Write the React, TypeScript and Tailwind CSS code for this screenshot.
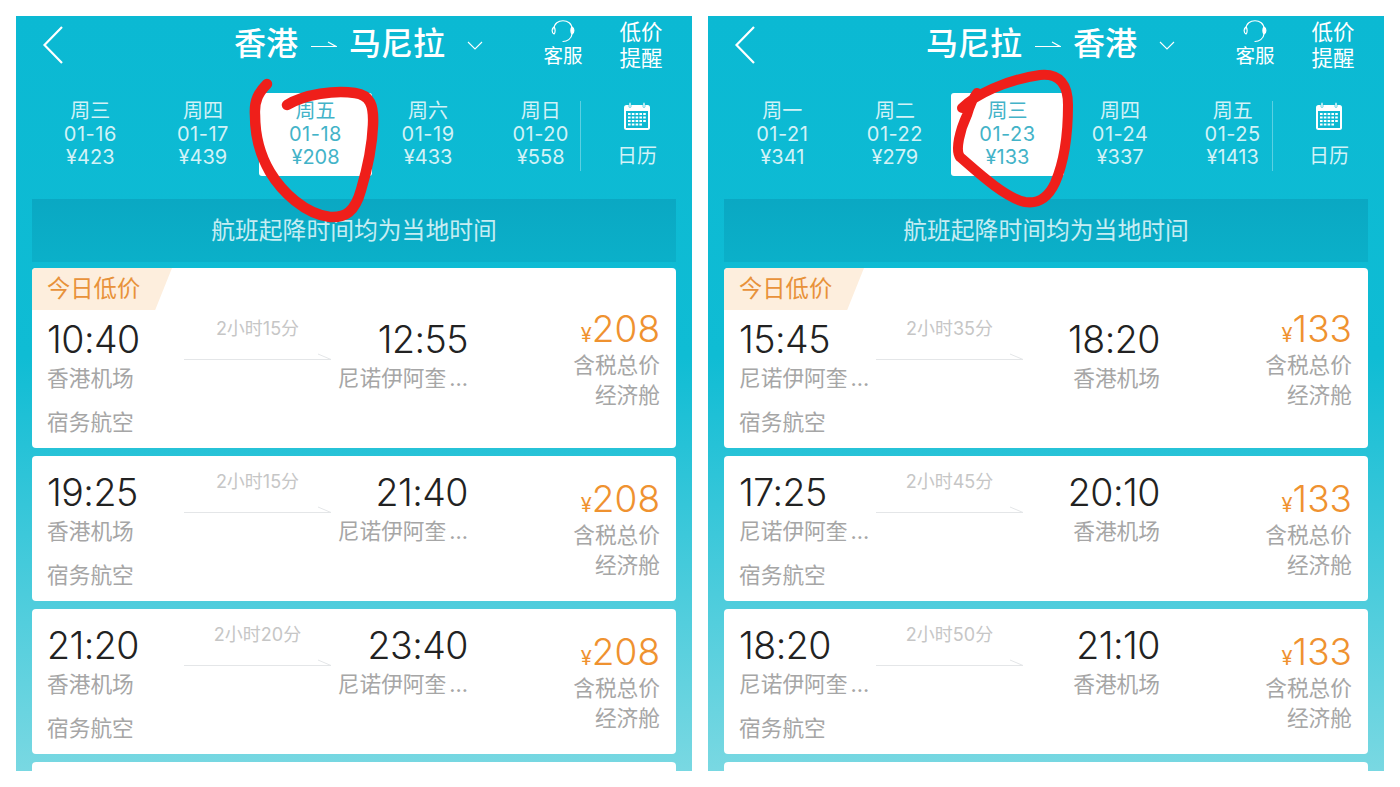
import React from 'react';

type Day = { week: string; date: string; price: string; active?: boolean };
type Flight = { dep: string; arr: string; from: React.ReactNode; to: React.ReactNode; dur: string; price: string; low?: boolean };
type Screen = { title: [string, string]; days: Day[]; flights: Flight[]; circle: React.ReactNode };

function Headset() {
  return (
    <svg width="28" height="24" viewBox="0 0 28 24" fill="none" stroke="white" strokeWidth="1.2" strokeLinecap="round">
      <path d="M5 10 C5 -1 23 -1 23 10" />
      <path d="M5 8 C2.5 9 2.5 14 5 15 C6.5 14 6.5 9 5 8 Z" />
      <path d="M23 8 C25.5 9 25.5 14 23 15 C21.5 14 21.5 9 23 8 Z" fill="white" />
      <path d="M23 15 C22.5 20 18 22.5 14 22.5" />
    </svg>
  );
}

function CalendarIcon() {
  return (
    <svg width="30" height="30" viewBox="0 0 30 30" fill="none">
      <rect x="2" y="4" width="26" height="25" rx="2.5" fill="white" />
      <rect x="4" y="10" width="22" height="17" fill="#0db8d2" />
      <rect x="7" y="1.5" width="2" height="5" rx="1" fill="white" stroke="#0db8d2" strokeWidth="0.6" />
      <rect x="21" y="1.5" width="2" height="5" rx="1" fill="white" stroke="#0db8d2" strokeWidth="0.6" />
      <path d="M6 13 H24 M6 16.5 H24 M6 20 H24 M6 23.5 H20" stroke="white" strokeWidth="2.2" strokeDasharray="2.6 1.2" />
    </svg>
  );
}

function FlightCard({ f }: { f: Flight }) {
  return (
    <div className={`relative flex shrink-0 rounded-[4px] bg-white ${f.low ? 'h-[180px]' : 'h-[145px]'}`}>
      {f.low && (
        <div className="absolute left-0 top-0 flex h-[42px] w-[140px] items-center rounded-tl-[4px] bg-[#fdeedd] pl-[15px] text-[23.3px] text-[#e8923a] [clip-path:polygon(0_0,100%_0,88%_100%,0_100%)]">
          今日低价
        </div>
      )}
      <div className={`w-[152px] shrink-0 pl-[15px] ${f.low ? 'pt-[49px]' : 'pt-[14px]'}`}>
        <div className="h-[46px] text-[37.5px] leading-[46px] font-light tracking-[-0.5px] text-[#222]">{f.dep}</div>
        <div className="mt-[2px] h-[26px] text-[21.7px] leading-[26px] whitespace-nowrap text-[#a6a6a6]">{f.from}</div>
        <div className="mt-[18px] h-[26px] text-[21.7px] leading-[26px] text-[#a6a6a6]">宿务航空</div>
      </div>
      <div className={`w-[147px] shrink-0 ${f.low ? 'pt-[50px]' : 'pt-[15px]'}`}>
        <div className="h-[22px] text-center text-[18px] leading-[22px] text-[#c6c6c6]">{f.dur}</div>
        <svg className="mt-[11px] block" width="147" height="10" viewBox="0 0 147 10" fill="none" stroke="#e4e6e8" strokeWidth="1">
          <path d="M0 8.5 H147 L134 3" />
        </svg>
      </div>
      <div className={`w-[137px] shrink-0 text-right ${f.low ? 'pt-[49px]' : 'pt-[14px]'}`}>
        <div className="h-[46px] text-[37.5px] leading-[46px] font-light tracking-[-0.5px] text-[#222]">{f.arr}</div>
        <div className="mt-[2px] h-[26px] text-[21.7px] leading-[26px] whitespace-nowrap text-[#a6a6a6]">{f.to}</div>
      </div>
      <div className={`flex-1 pr-[16px] text-right ${f.low ? 'pt-[38px]' : 'pt-[20px]'}`}>
        <div className="h-[46px] leading-[46px] text-[#ef9230]">
          <span className="text-[20px]">¥</span>
          <span className="text-[37px] font-light">{f.price}</span>
        </div>
        <div className="h-[26px] text-[21.7px] leading-[26px] text-[#a6a6a6]">含税总价</div>
        <div className="mt-[4px] h-[26px] text-[21.7px] leading-[26px] text-[#a6a6a6]">经济舱</div>
      </div>
    </div>
  );
}

function Panel({ s }: { s: Screen }) {
  return (
    <div className="relative flex h-[755px] w-[676px] shrink-0 flex-col overflow-hidden bg-[linear-gradient(#0bb9d3,#0fbcd4_45%,#79d8e2)]">
      <div className="flex h-[74px] shrink-0 items-start text-white">
        <svg className="mt-[9px] ml-[26px] shrink-0" width="22" height="40" viewBox="0 0 22 40" fill="none" stroke="white" strokeWidth="2.2">
          <path d="M20 2 L2.5 20 L20 38" />
        </svg>
        <div className="mt-[6px] ml-[170px] flex h-[44px] w-[211px] shrink-0 items-center justify-between text-[32px] font-medium">
          <span>{s.title[0]}</span>
          <svg width="26" height="12" viewBox="0 0 26 12" fill="none" stroke="white" strokeWidth="1.2">
            <path d="M0 8.5 H25 L17 4" />
          </svg>
          <span>{s.title[1]}</span>
        </div>
        <svg className="mt-[25px] ml-[22px] shrink-0" width="16" height="9" viewBox="0 0 16 9" fill="none" stroke="white" strokeWidth="1.1">
          <path d="M1 1 L8 8 L15 1" />
        </svg>
        <div className="mt-[3px] ml-[55px] flex w-[50px] shrink-0 flex-col items-center">
          <Headset />
          <div className="mt-[1px] text-[19.5px] leading-[24px]">客服</div>
        </div>
        <div className="mt-[3px] ml-[31px] w-[44px] shrink-0 text-center text-[21.5px] leading-[26px] whitespace-nowrap">
          低价
          <br />
          提醒
        </div>
      </div>

      <div className="flex h-[86px] shrink-0 pr-[15px] pl-[18px] text-center text-[#d2f2f7]">
        {s.days.map((d, i) => (
          <div
            key={d.date}
            className={`relative mt-[3px] flex h-[83px] w-[112.6px] shrink-0 flex-col items-center justify-center text-[20px] leading-[23px] ${d.active ? 'rounded-[3px] bg-white text-[#43b3c8]' : ''}`}
          >
            <div>{d.week}</div>
            <div className="tracking-[0.5px]">{d.date}</div>
            <div>¥{d.price}</div>
            {i === 4 && <div className="absolute top-[8px] right-[16px] h-[70px] w-px bg-[#5cd0e2]" />}
          </div>
        ))}
        <div className="flex flex-1 flex-col items-center pt-[11px]">
          <CalendarIcon />
          <div className="mt-[12px] text-[20px] leading-[26px]">日历</div>
        </div>
      </div>

      <div className="mx-[16px] mt-[23px] flex h-[63px] shrink-0 items-center justify-center bg-[linear-gradient(#0aa8c3,#0bb0c9)] text-[23.8px] text-[#c6edf3]">
        航班起降时间均为当地时间
      </div>

      <div className="mx-[16px] mt-[6px] flex flex-col gap-[8px]">
        {s.flights.map((f) => (
          <FlightCard key={f.dep} f={f} />
        ))}
        <div className="h-[40px] shrink-0 rounded-[4px] bg-white" />
      </div>

      {s.circle}
    </div>
  );
}

const aquino = (
  <>
    尼诺伊阿奎<span className="ml-[3px]">…</span>
  </>
);
const base = { from: '香港机场', to: aquino };
const back = { from: aquino, to: '香港机场' };

const screens: Screen[] = [
  {
    title: ['香港', '马尼拉'],
    days: [
      { week: '周三', date: '01-16', price: '423' },
      { week: '周四', date: '01-17', price: '439' },
      { week: '周五', date: '01-18', price: '208', active: true },
      { week: '周六', date: '01-19', price: '433' },
      { week: '周日', date: '01-20', price: '558' },
    ],
    flights: [
      { ...base, dep: '10:40', arr: '12:55', dur: '2小时15分', price: '208', low: true },
      { ...base, dep: '19:25', arr: '21:40', dur: '2小时15分', price: '208' },
      { ...base, dep: '21:20', arr: '23:40', dur: '2小时20分', price: '208' },
    ],
    circle: (
      <svg className="absolute inset-0" width="676" height="755" viewBox="16 16 676 755" fill="none">
        <path
          d="M267 84 C259 92 254 100 255 115 C255 135 260 155 270 172 C282 192 305 214 330 217 C345 218 355 212 361 190 C367 170 372 150 373 125 C374 105 370 95 355 93 C335 90 305 94 287 105"
          stroke="#ef1f1a"
          strokeWidth="10.5"
          strokeLinecap="round"
        />
      </svg>
    ),
  },
  {
    title: ['马尼拉', '香港'],
    days: [
      { week: '周一', date: '01-21', price: '341' },
      { week: '周二', date: '01-22', price: '279' },
      { week: '周三', date: '01-23', price: '133', active: true },
      { week: '周四', date: '01-24', price: '337' },
      { week: '周五', date: '01-25', price: '1413' },
    ],
    flights: [
      { ...back, dep: '15:45', arr: '18:20', dur: '2小时35分', price: '133', low: true },
      { ...back, dep: '17:25', arr: '20:10', dur: '2小时45分', price: '133' },
      { ...back, dep: '18:20', arr: '21:10', dur: '2小时50分', price: '133' },
    ],
    circle: (
      <svg className="absolute inset-0" width="676" height="755" viewBox="708 16 676 755" fill="none">
        <path
          d="M962 108 C975 95 1005 80 1040 75 C1060 73 1068 85 1068 105 C1068 135 1065 160 1055 183 C1048 198 1038 204 1025 202 C1005 198 975 170 960 157 C955 150 960 130 967 115 C970 105 973 98 977 93"
          stroke="#ef1f1a"
          strokeWidth="10"
          strokeLinecap="round"
        />
      </svg>
    ),
  },
];

export default function App() {
  return (
    <div className="flex h-[787px] w-[1400px] gap-[16px] overflow-hidden bg-white pt-[16px] pl-[16px] font-['Inter','Noto_Sans_CJK_SC',sans-serif]">
      {screens.map((s) => (
        <Panel key={s.title[0]} s={s} />
      ))}
    </div>
  );
}
